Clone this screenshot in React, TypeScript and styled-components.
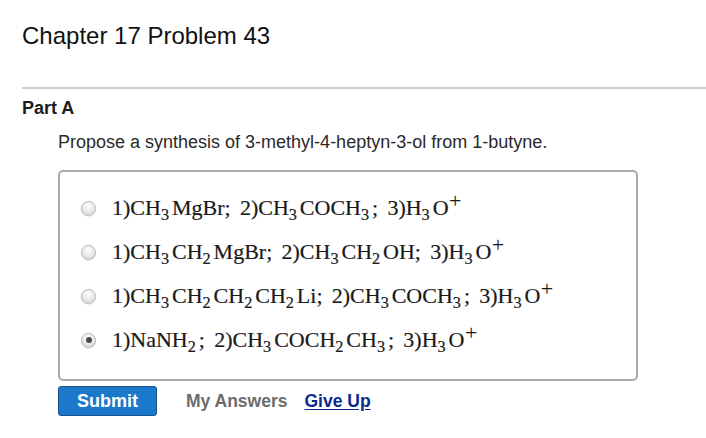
import React, { useState } from "react";
import styled, { createGlobalStyle } from "styled-components";

const GlobalStyle = createGlobalStyle`
  html, body {
    margin: 0;
    padding: 0;
    background: #fff;
  }
  body {
    font-family: "Liberation Sans", Arial, Helvetica, sans-serif;
    color: #222;
  }
`;

const Page = styled.div`
  padding: 22px 0 0 22px;
`;

const Title = styled.h1`
  margin: 0;
  font-size: 24px;
  font-weight: normal;
  line-height: 28px;
  color: #111;
`;

const Rule = styled.hr`
  margin: 37px 0 0 0;
  border: none;
  height: 2px;
  background: #cdcdcd;
`;

const PartTitle = styled.h2`
  margin: 9px 0 0 0;
  font-size: 18px;
  font-weight: bold;
  line-height: 21px;
  color: #1c1c1c;
`;

const Section = styled.div`
  padding-left: 36px;
`;

const Prompt = styled.p`
  margin: 13px 0 0 0;
  font-size: 18px;
  line-height: 21px;
  color: #2a2a2a;
`;

const ChoiceBox = styled.div`
  margin-top: 17px;
  width: 555px;
  border: 2px solid #a9a9a9;
  border-radius: 5px;
  padding: 14px 0 17px 21px;
  box-sizing: content-box;
`;

const ChoiceRow = styled.label`
  display: flex;
  align-items: center;
  height: 44px;
  cursor: pointer;
`;

const Radio = styled.input`
  appearance: none;
  margin: 0 16px 0 0;
  width: 15px;
  height: 15px;
  border-radius: 50%;
  border: 1px solid #b4b4b4;
  background: radial-gradient(circle at 50% 30%, #ffffff 0%, #e6e6e6 60%, #d2d2d2 100%);
  box-shadow: 0 1px 1px rgba(0, 0, 0, 0.08);
  box-sizing: border-box;
  flex-shrink: 0;
  position: relative;

  &:checked::after {
    content: "";
    position: absolute;
    left: 3.5px;
    top: 3.5px;
    width: 6px;
    height: 6px;
    border-radius: 50%;
    background: #4a4a4a;
  }
`;

const Formula = styled.span`
  font-family: "Liberation Serif", "Times New Roman", serif;
  font-size: 22px;
  color: #1a1a1a;
  white-space: nowrap;
  line-height: 1;
  -webkit-text-stroke: 0.2px #1a1a1a;
`;

const Sub = styled.sub`
  font-size: 0.74em;
  vertical-align: -0.28em;
  line-height: 0;
  margin-right: 0.18em;
`;

const Sup = styled.sup`
  font-size: 1em;
  vertical-align: 0.3em;
  line-height: 0;
  margin-left: 0.02em;
  -webkit-text-stroke: 0;
`;

const Gap = styled.span`
  display: inline-block;
  width: 0.42em;
`;

const Actions = styled.div`
  display: flex;
  align-items: center;
  margin-top: 5px;
`;

const SubmitButton = styled.button`
  width: 99px;
  height: 30px;
  border: 1px solid #1b4f8e;
  border-radius: 3px;
  background: #1a79cb;
  color: #fff;
  font-family: "Liberation Sans", Arial, sans-serif;
  font-size: 18px;
  font-weight: bold;
  padding: 0;
  cursor: pointer;
`;

const TextLink = styled.a<{ $muted?: boolean }>`
  font-size: 17.5px;
  font-weight: bold;
  color: ${({ $muted }) => ($muted ? "#6c6c6c" : "#0b2b8c")};
  text-decoration: ${({ $muted }) => ($muted ? "none" : "underline")};
  text-underline-offset: 2px;
  margin-left: ${({ $muted }) => ($muted ? "29px" : "17px")};
  cursor: pointer;
`;

const options = [
  <>
    1)CH<Sub>3</Sub>MgBr;<Gap />2)CH<Sub>3</Sub>COCH<Sub>3</Sub>;<Gap />3)H<Sub>3</Sub>O<Sup>+</Sup>
  </>,
  <>
    1)CH<Sub>3</Sub>CH<Sub>2</Sub>MgBr;<Gap />2)CH<Sub>3</Sub>CH<Sub>2</Sub>OH;<Gap />3)H<Sub>3</Sub>O<Sup>+</Sup>
  </>,
  <>
    1)CH<Sub>3</Sub>CH<Sub>2</Sub>CH<Sub>2</Sub>CH<Sub>2</Sub>Li;<Gap />2)CH<Sub>3</Sub>COCH<Sub>3</Sub>;<Gap />3)H<Sub>3</Sub>O<Sup>+</Sup>
  </>,
  <>
    1)NaNH<Sub>2</Sub>;<Gap />2)CH<Sub>3</Sub>COCH<Sub>2</Sub>CH<Sub>3</Sub>;<Gap />3)H<Sub>3</Sub>O<Sup>+</Sup>
  </>,
];

export default function App() {
  const [choice, setChoice] = useState(3);

  return (
    <>
      <GlobalStyle />
      <Page>
        <Title>Chapter 17 Problem 43</Title>
        <Rule />
        <PartTitle>Part A</PartTitle>
        <Section>
          <Prompt>Propose a synthesis of 3-methyl-4-heptyn-3-ol from 1-butyne.</Prompt>
          <ChoiceBox>
            {options.map((opt, i) => (
              <ChoiceRow key={i}>
                <Radio
                  type="radio"
                  name="answer"
                  checked={choice === i}
                  onChange={() => setChoice(i)}
                />
                <Formula>{opt}</Formula>
              </ChoiceRow>
            ))}
          </ChoiceBox>
          <Actions>
            <SubmitButton type="button">Submit</SubmitButton>
            <TextLink $muted>My Answers</TextLink>
            <TextLink>Give Up</TextLink>
          </Actions>
        </Section>
      </Page>
    </>
  );
}
